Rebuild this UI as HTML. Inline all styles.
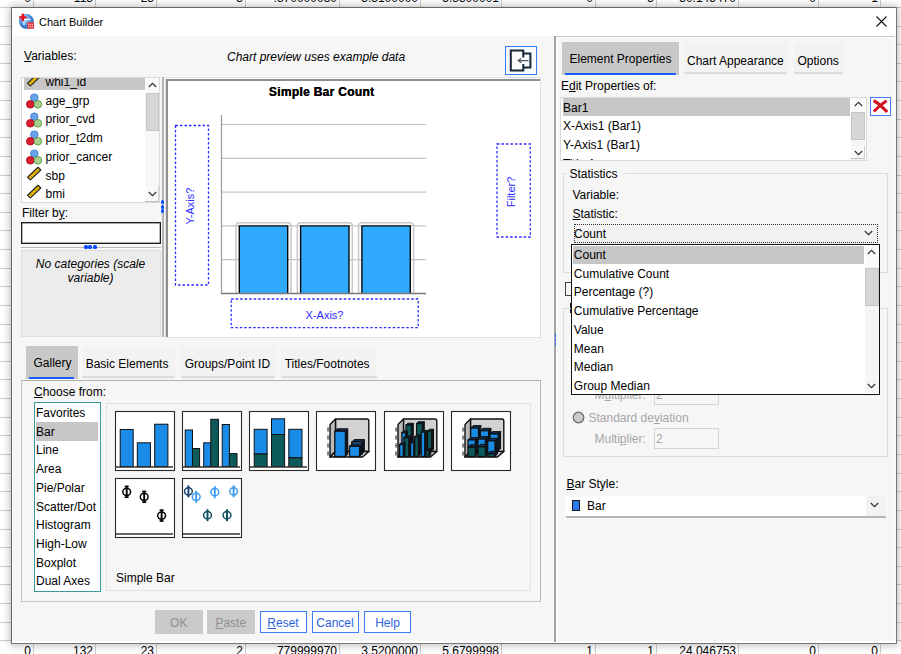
<!DOCTYPE html>
<html><head><meta charset="utf-8"><title>Chart Builder</title>
<style>
html,body{margin:0;padding:0;width:901px;height:654px;overflow:hidden;background:#fff;font-family:"Liberation Sans",sans-serif;font-size:12px;color:#000}
.a{position:absolute;box-sizing:border-box}
.t{position:absolute;line-height:14px;white-space:nowrap}
.u{text-decoration:underline;text-underline-offset:1px}
svg{position:absolute;overflow:visible}
</style></head><body>
<div class="a" style="left:0px;top:7px;width:901px;height:1px;background:#cdcdcd"></div>
<div class="a" style="left:0px;top:26px;width:901px;height:1px;background:#cdcdcd"></div>
<div class="a" style="left:0px;top:44px;width:901px;height:1px;background:#cdcdcd"></div>
<div class="a" style="left:0px;top:63px;width:901px;height:1px;background:#cdcdcd"></div>
<div class="a" style="left:0px;top:81px;width:901px;height:1px;background:#cdcdcd"></div>
<div class="a" style="left:0px;top:100px;width:901px;height:1px;background:#cdcdcd"></div>
<div class="a" style="left:0px;top:119px;width:901px;height:1px;background:#cdcdcd"></div>
<div class="a" style="left:0px;top:137px;width:901px;height:1px;background:#cdcdcd"></div>
<div class="a" style="left:0px;top:156px;width:901px;height:1px;background:#cdcdcd"></div>
<div class="a" style="left:0px;top:175px;width:901px;height:1px;background:#cdcdcd"></div>
<div class="a" style="left:0px;top:193px;width:901px;height:1px;background:#cdcdcd"></div>
<div class="a" style="left:0px;top:212px;width:901px;height:1px;background:#cdcdcd"></div>
<div class="a" style="left:0px;top:230px;width:901px;height:1px;background:#cdcdcd"></div>
<div class="a" style="left:0px;top:249px;width:901px;height:1px;background:#cdcdcd"></div>
<div class="a" style="left:0px;top:268px;width:901px;height:1px;background:#cdcdcd"></div>
<div class="a" style="left:0px;top:286px;width:901px;height:1px;background:#cdcdcd"></div>
<div class="a" style="left:0px;top:305px;width:901px;height:1px;background:#cdcdcd"></div>
<div class="a" style="left:0px;top:324px;width:901px;height:1px;background:#cdcdcd"></div>
<div class="a" style="left:0px;top:342px;width:901px;height:1px;background:#cdcdcd"></div>
<div class="a" style="left:0px;top:361px;width:901px;height:1px;background:#cdcdcd"></div>
<div class="a" style="left:0px;top:379px;width:901px;height:1px;background:#cdcdcd"></div>
<div class="a" style="left:0px;top:398px;width:901px;height:1px;background:#cdcdcd"></div>
<div class="a" style="left:0px;top:417px;width:901px;height:1px;background:#cdcdcd"></div>
<div class="a" style="left:0px;top:435px;width:901px;height:1px;background:#cdcdcd"></div>
<div class="a" style="left:0px;top:454px;width:901px;height:1px;background:#cdcdcd"></div>
<div class="a" style="left:0px;top:473px;width:901px;height:1px;background:#cdcdcd"></div>
<div class="a" style="left:0px;top:491px;width:901px;height:1px;background:#cdcdcd"></div>
<div class="a" style="left:0px;top:510px;width:901px;height:1px;background:#cdcdcd"></div>
<div class="a" style="left:0px;top:529px;width:901px;height:1px;background:#cdcdcd"></div>
<div class="a" style="left:0px;top:547px;width:901px;height:1px;background:#cdcdcd"></div>
<div class="a" style="left:0px;top:566px;width:901px;height:1px;background:#cdcdcd"></div>
<div class="a" style="left:0px;top:584px;width:901px;height:1px;background:#cdcdcd"></div>
<div class="a" style="left:0px;top:603px;width:901px;height:1px;background:#cdcdcd"></div>
<div class="a" style="left:0px;top:622px;width:901px;height:1px;background:#cdcdcd"></div>
<div class="a" style="left:0px;top:640px;width:901px;height:1px;background:#cdcdcd"></div>
<div class="a" style="left:33px;top:0px;width:1px;height:654px;background:#cdcdcd"></div>
<div class="a" style="left:95px;top:0px;width:1px;height:654px;background:#cdcdcd"></div>
<div class="a" style="left:156px;top:0px;width:1px;height:654px;background:#cdcdcd"></div>
<div class="a" style="left:245px;top:0px;width:1px;height:654px;background:#cdcdcd"></div>
<div class="a" style="left:339px;top:0px;width:1px;height:654px;background:#cdcdcd"></div>
<div class="a" style="left:420px;top:0px;width:1px;height:654px;background:#cdcdcd"></div>
<div class="a" style="left:501px;top:0px;width:1px;height:654px;background:#cdcdcd"></div>
<div class="a" style="left:595px;top:0px;width:1px;height:654px;background:#cdcdcd"></div>
<div class="a" style="left:656px;top:0px;width:1px;height:654px;background:#cdcdcd"></div>
<div class="a" style="left:738px;top:0px;width:1px;height:654px;background:#cdcdcd"></div>
<div class="a" style="left:818px;top:0px;width:1px;height:654px;background:#cdcdcd"></div>
<div class="a" style="left:880px;top:0px;width:1px;height:654px;background:#cdcdcd"></div>
<div class="t" style="left:-169px;top:-9px;width:200px;text-align:right;font-size:12px;">0</div>
<div class="t" style="left:-107px;top:-9px;width:200px;text-align:right;font-size:12px;">118</div>
<div class="t" style="left:-46px;top:-9px;width:200px;text-align:right;font-size:12px;">23</div>
<div class="t" style="left:43px;top:-9px;width:200px;text-align:right;font-size:12px;">3</div>
<div class="t" style="left:137px;top:-9px;width:200px;text-align:right;font-size:12px;">.870000030</div>
<div class="t" style="left:218px;top:-9px;width:200px;text-align:right;font-size:12px;">3.3100000</div>
<div class="t" style="left:299px;top:-9px;width:200px;text-align:right;font-size:12px;">5.8300001</div>
<div class="t" style="left:393px;top:-9px;width:200px;text-align:right;font-size:12px;">0</div>
<div class="t" style="left:454px;top:-9px;width:200px;text-align:right;font-size:12px;">3</div>
<div class="t" style="left:536px;top:-9px;width:200px;text-align:right;font-size:12px;">30.145470</div>
<div class="t" style="left:616px;top:-9px;width:200px;text-align:right;font-size:12px;">0</div>
<div class="t" style="left:678px;top:-9px;width:200px;text-align:right;font-size:12px;">1</div>
<div class="t" style="left:-169px;top:644px;width:200px;text-align:right;font-size:12px;">0</div>
<div class="t" style="left:-107px;top:644px;width:200px;text-align:right;font-size:12px;">132</div>
<div class="t" style="left:-46px;top:644px;width:200px;text-align:right;font-size:12px;">23</div>
<div class="t" style="left:43px;top:644px;width:200px;text-align:right;font-size:12px;">2</div>
<div class="t" style="left:137px;top:644px;width:200px;text-align:right;font-size:12px;">.779999970</div>
<div class="t" style="left:218px;top:644px;width:200px;text-align:right;font-size:12px;">3.5200000</div>
<div class="t" style="left:299px;top:644px;width:200px;text-align:right;font-size:12px;">5.6799998</div>
<div class="t" style="left:393px;top:644px;width:200px;text-align:right;font-size:12px;">1</div>
<div class="t" style="left:454px;top:644px;width:200px;text-align:right;font-size:12px;">1</div>
<div class="t" style="left:536px;top:644px;width:200px;text-align:right;font-size:12px;">24.046753</div>
<div class="t" style="left:616px;top:644px;width:200px;text-align:right;font-size:12px;">0</div>
<div class="t" style="left:678px;top:644px;width:200px;text-align:right;font-size:12px;">0</div>
<div class="a" style="left:11px;top:7px;width:886px;height:637px;border:1px solid #666;border-right:1.5px solid #777;border-bottom:1.5px solid #777;background:#f6f6f6;box-shadow:0 0 8px 1px rgba(0,0,0,.28)"></div>
<div class="a" style="left:12px;top:8px;width:884px;height:28px;background:#fff"></div>
<div class="a" style="left:12px;top:36px;width:1.3px;height:606px;background:#fff"></div>
<div class="a" style="left:12px;top:641px;width:884px;height:1.5px;background:#fff"></div>
<div class="t" style="left:39px;top:15px;font-size:11px;color:#000">Chart Builder</div>
<svg style="left:16px;top:11px" width="22" height="22" viewBox="0 0 22 22"><defs><radialGradient id="gb" cx="0.4" cy="0.35" r="0.7"><stop offset="0" stop-color="#cfe6ff"/><stop offset="0.55" stop-color="#4a90e0"/><stop offset="1" stop-color="#1f5fb8"/></radialGradient></defs><circle cx="10.4" cy="10.4" r="7.4" fill="url(#gb)"/><path d="M8 8.5 H14.5 M8 10.5 V14" stroke="#eef6ff" stroke-width="1.2"/><rect x="11.2" y="11.2" width="6.8" height="6.6" fill="#e0404a"/><path d="M12.3 13.6 H17 M12.3 15.6 H17" stroke="#fff" stroke-width="0.8" stroke-dasharray="1 0.8"/><path d="M3.2 6.4 H10.4 M6.8 2.8 V10" stroke="#e0101a" stroke-width="2.4"/></svg>
<svg style="left:876px;top:16px" width="11" height="11" viewBox="0 0 11 11"><path d="M0.5 0.5 L10.5 10.5 M10.5 0.5 L0.5 10.5" stroke="#111" stroke-width="1.1"/></svg>
<div class="t" style="left:24px;top:49px;font-size:12px;"><span class="u">V</span>ariables:</div>
<div class="a" style="left:21px;top:77px;width:139px;height:126px;background:#fff;border:1px solid #dadada"></div>
<div class="a" style="left:22px;top:78px;width:123px;height:124px;overflow:hidden">
<div class="a" style="left:2px;top:0px;width:121px;height:12px;background:#c6c6c6"></div>
<svg style="left:4px;top:-6.6px" width="17" height="16" viewBox="0 0 17 16"><path d="M1.6 12.2 L12 2.3 L14.8 5 L4.4 14.9 Z" fill="#f4c400" stroke="#2a2a2a" stroke-width="1.25" stroke-linejoin="round"/><path d="M4.6 10.6 L5.6 11.6 M6.6 8.7 L7.4 9.5 M8.6 6.8 L9.6 7.8 M10.6 4.9 L11.4 5.7" stroke="#4a3a00" stroke-width="0.9"/></svg>
<div class="t" style="left:23.5px;top:-3.0px">whi1_id</div>
<svg style="left:4px;top:14.800000000000002px" width="17" height="17" viewBox="0 0 17 17"><circle cx="8.3" cy="4.6" r="3.7" fill="#6aa4ec" stroke="#3a78d0" stroke-width="0.9"/><circle cx="4.3" cy="11.3" r="3.8" fill="#d82030" stroke="#b00818" stroke-width="0.9"/><circle cx="11.9" cy="11.3" r="3.8" fill="#a8d08c" stroke="#5a9a40" stroke-width="0.9"/></svg>
<div class="t" style="left:23.5px;top:15.700000000000003px">age_grp</div>
<svg style="left:4px;top:33.50000000000001px" width="17" height="17" viewBox="0 0 17 17"><circle cx="8.3" cy="4.6" r="3.7" fill="#6aa4ec" stroke="#3a78d0" stroke-width="0.9"/><circle cx="4.3" cy="11.3" r="3.8" fill="#d82030" stroke="#b00818" stroke-width="0.9"/><circle cx="11.9" cy="11.3" r="3.8" fill="#a8d08c" stroke="#5a9a40" stroke-width="0.9"/></svg>
<div class="t" style="left:23.5px;top:34.400000000000006px">prior_cvd</div>
<svg style="left:4px;top:52.199999999999996px" width="17" height="17" viewBox="0 0 17 17"><circle cx="8.3" cy="4.6" r="3.7" fill="#6aa4ec" stroke="#3a78d0" stroke-width="0.9"/><circle cx="4.3" cy="11.3" r="3.8" fill="#d82030" stroke="#b00818" stroke-width="0.9"/><circle cx="11.9" cy="11.3" r="3.8" fill="#a8d08c" stroke="#5a9a40" stroke-width="0.9"/></svg>
<div class="t" style="left:23.5px;top:53.099999999999994px">prior_t2dm</div>
<svg style="left:4px;top:70.90000000000002px" width="17" height="17" viewBox="0 0 17 17"><circle cx="8.3" cy="4.6" r="3.7" fill="#6aa4ec" stroke="#3a78d0" stroke-width="0.9"/><circle cx="4.3" cy="11.3" r="3.8" fill="#d82030" stroke="#b00818" stroke-width="0.9"/><circle cx="11.9" cy="11.3" r="3.8" fill="#a8d08c" stroke="#5a9a40" stroke-width="0.9"/></svg>
<div class="t" style="left:23.5px;top:71.80000000000001px">prior_cancer</div>
<svg style="left:4px;top:87.4px" width="17" height="16" viewBox="0 0 17 16"><path d="M1.6 12.2 L12 2.3 L14.8 5 L4.4 14.9 Z" fill="#f4c400" stroke="#2a2a2a" stroke-width="1.25" stroke-linejoin="round"/><path d="M4.6 10.6 L5.6 11.6 M6.6 8.7 L7.4 9.5 M8.6 6.8 L9.6 7.8 M10.6 4.9 L11.4 5.7" stroke="#4a3a00" stroke-width="0.9"/></svg>
<div class="t" style="left:23.5px;top:90.5px">sbp</div>
<svg style="left:4px;top:105.4px" width="17" height="16" viewBox="0 0 17 16"><path d="M1.6 12.2 L12 2.3 L14.8 5 L4.4 14.9 Z" fill="#f4c400" stroke="#2a2a2a" stroke-width="1.25" stroke-linejoin="round"/><path d="M4.6 10.6 L5.6 11.6 M6.6 8.7 L7.4 9.5 M8.6 6.8 L9.6 7.8 M10.6 4.9 L11.4 5.7" stroke="#4a3a00" stroke-width="0.9"/></svg>
<div class="t" style="left:23.5px;top:109.19999999999999px">bmi</div>
</div>
<div class="a" style="left:145px;top:78px;width:14px;height:124px;background:#f7f7f7"></div>
<div class="a" style="left:145px;top:78px;width:14px;height:15px;background:#fafafa"></div>
<div class="a" style="left:145.5px;top:93px;width:13px;height:38px;background:#d6d6d6;border:1px solid #c6c6c6"></div>
<svg style="left:148px;top:82px" width="9" height="6" viewBox="0 0 9 6"><path d="M0.8 5 L4.5 1.3 L8.2 5" fill="none" stroke="#333" stroke-width="1.2"/></svg>
<div class="a" style="left:145px;top:187px;width:14px;height:14.5px;background:#f9f9f9;border-right:1px solid #cfcfcf;border-bottom:1.5px solid #bdbdbd"></div>
<svg style="left:148px;top:191px" width="9" height="6" viewBox="0 0 9 6"><path d="M0.8 1 L4.5 4.7 L8.2 1" fill="none" stroke="#333" stroke-width="1.2"/></svg>
<div class="t" style="left:22px;top:206px;font-size:12px;">Filter b<span class="u">y</span>:</div>
<div class="a" style="left:21px;top:222px;width:140px;height:22px;background:#fff;border:1px solid #1e1e1e;box-shadow:inset 0 0 0 0.4px #555"></div>
<div class="a" style="left:21px;top:247px;width:140px;height:1px;background:#b8b8b8"></div>
<div class="a" style="left:84.0px;top:245px;width:4px;height:3.5px;background:#0a4cff;border-radius:1.5px"></div>
<div class="a" style="left:88.4px;top:245px;width:4px;height:3.5px;background:#0a4cff;border-radius:1.5px"></div>
<div class="a" style="left:92.8px;top:245px;width:4px;height:3.5px;background:#0a4cff;border-radius:1.5px"></div>
<div class="a" style="left:21px;top:250px;width:140px;height:87px;background:#ececec;border:1px solid #dedede"></div>
<div class="t" style="left:-59.5px;top:257px;width:300px;text-align:center;font-size:12px;font-style:italic">No categories (scale</div>
<div class="t" style="left:-59.5px;top:271px;width:300px;text-align:center;font-size:12px;font-style:italic">variable)</div>
<div class="a" style="left:162px;top:77px;width:2px;height:260px;background:#b4b4b4"></div>
<div class="a" style="left:161px;top:200.0px;width:3px;height:4px;background:#0a4cff;border-radius:1.5px"></div>
<div class="a" style="left:161px;top:204.7px;width:3px;height:4px;background:#0a4cff;border-radius:1.5px"></div>
<div class="a" style="left:161px;top:209.4px;width:3px;height:4px;background:#0a4cff;border-radius:1.5px"></div>
<div class="t" style="left:227px;top:50px;font-size:12px;font-style:italic">Chart preview uses example data</div>
<div class="a" style="left:505px;top:46px;width:32px;height:29px;background:#fafafa;border:1px solid #2f7ff0"></div>
<svg style="left:505px;top:46px" width="32" height="29" viewBox="0 0 32 29"><path d="M18.3 11.5 V4.6 H5.8 V24.4 H18.3 V17.9" fill="none" stroke="#17283a" stroke-width="2"/><path d="M18.3 7.4 H25.4 V21.5 H18.3" fill="none" stroke="#17283a" stroke-width="2"/><path d="M23.5 14.6 H13.8 M16.2 12.4 L13.2 14.6 L16.2 16.8" fill="none" stroke="#50606e" stroke-width="1.3"/></svg>
<div class="a" style="left:165px;top:77px;width:376px;height:261px;background:#fff;border:1px solid #e0e0e0"></div>
<div class="a" style="left:166px;top:79px;width:2px;height:258px;background:#8e8e8e"></div>
<div class="a" style="left:166px;top:79px;width:374px;height:2px;background:#8e8e8e"></div>
<div class="t" style="left:171.5px;top:84.8px;width:300px;text-align:center;font-size:12px;font-weight:bold;letter-spacing:0.3px;text-shadow:0.35px 0 0 #000">Simple Bar Count</div>
<svg style="left:165px;top:77px" width="375" height="260" viewBox="165 77 375 260"><line x1="221.5" y1="115" x2="221.5" y2="294" stroke="#9a9a9a" stroke-width="1.2"/><line x1="222" y1="124.5" x2="426" y2="124.5" stroke="#c4c4c4" stroke-width="1.2"/><line x1="222" y1="158.3" x2="426" y2="158.3" stroke="#c4c4c4" stroke-width="1.2"/><line x1="222" y1="192.1" x2="426" y2="192.1" stroke="#c4c4c4" stroke-width="1.2"/><line x1="222" y1="225.9" x2="426" y2="225.9" stroke="#c4c4c4" stroke-width="1.2"/><line x1="222" y1="259.7" x2="426" y2="259.7" stroke="#c4c4c4" stroke-width="1.2"/><path d="M236.0 294 V226 Q236.0 222.7 239.3 222.7 H287.7 Q291.0 222.7 291.0 226 V294" fill="none" stroke="#c8c8c8" stroke-width="1.5"/><path d="M239.3 294 V225.9 H287.7 V294" fill="#30aaff" stroke="#0a0a0a" stroke-width="1.4"/><path d="M297.3 294 V226 Q297.3 222.7 300.6 222.7 H349.0 Q352.3 222.7 352.3 226 V294" fill="none" stroke="#c8c8c8" stroke-width="1.5"/><path d="M300.6 294 V225.9 H349.0 V294" fill="#30aaff" stroke="#0a0a0a" stroke-width="1.4"/><path d="M358.59999999999997 294 V226 Q358.59999999999997 222.7 361.9 222.7 H410.29999999999995 Q413.59999999999997 222.7 413.59999999999997 226 V294" fill="none" stroke="#c8c8c8" stroke-width="1.5"/><path d="M361.9 294 V225.9 H410.29999999999995 V294" fill="#30aaff" stroke="#0a0a0a" stroke-width="1.4"/><line x1="221" y1="293.5" x2="426" y2="293.5" stroke="#7a7a7a" stroke-width="1.3"/><rect x="175.5" y="125.5" width="33.0" height="159.5" fill="none" stroke="#2d2dff" stroke-width="1.3" stroke-dasharray="2.5 2"/><rect x="231.2" y="299" width="187.0" height="28.600000000000023" fill="none" stroke="#2d2dff" stroke-width="1.3" stroke-dasharray="2.5 2"/><rect x="497" y="144" width="33.299999999999955" height="93" fill="none" stroke="#2d2dff" stroke-width="1.3" stroke-dasharray="2.5 2"/></svg>
<div class="t" style="left:190.4px;top:206px;width:0;height:0;font-size:11px;color:#2d2dff"><div style="position:absolute;left:-20px;top:-7px;width:40px;text-align:center;transform:rotate(-90deg)">Y-Axis?</div></div>
<div class="t" style="left:174.5px;top:308px;width:300px;text-align:center;font-size:11px;color:#2d2dff">X-Axis?</div>
<div class="t" style="left:511px;top:191.6px;width:0;height:0;font-size:11px;color:#2d2dff"><div style="position:absolute;left:-20px;top:-7px;width:40px;text-align:center;transform:rotate(-90deg)">Filter?</div></div>
<div class="a" style="left:26px;top:346px;width:52px;height:33px;background:#c8c8c8"></div>
<div class="a" style="left:29px;top:377px;width:45px;height:2px;background:#1a5cff"></div>
<div class="t" style="left:33.5px;top:356px;font-size:12px;">Gallery</div>
<div class="a" style="left:82px;top:346px;width:93px;height:33px;background:#f2f2f2"></div>
<div class="a" style="left:82px;top:376px;width:93px;height:2px;background:#dcdcdc"></div>
<div class="t" style="left:85.7px;top:357px;font-size:12px;">Basic Elements</div>
<div class="a" style="left:181px;top:346px;width:93.5px;height:33px;background:#f2f2f2"></div>
<div class="a" style="left:181px;top:376px;width:93.5px;height:2px;background:#dcdcdc"></div>
<div class="t" style="left:184.7px;top:357px;font-size:12px;">Groups/Point ID</div>
<div class="a" style="left:281px;top:346px;width:95.5px;height:33px;background:#f2f2f2"></div>
<div class="a" style="left:281px;top:376px;width:95.5px;height:2px;background:#dcdcdc"></div>
<div class="t" style="left:284.7px;top:357px;font-size:12px;">Titles/Footnotes</div>
<div class="a" style="left:21px;top:379.5px;width:519.5px;height:222.5px;border:1px solid #c4c4c4;border-top-color:#b0b0b0;border-right-color:#b8b8b8"></div>
<div class="t" style="left:34px;top:385px;font-size:12px;"><span class="u">C</span>hoose from:</div>
<div class="a" style="left:33.5px;top:402px;width:67px;height:189.5px;background:#fff;border:1px solid #3a9a9a"></div>
<div class="a" style="left:35.5px;top:422px;width:62.5px;height:19px;background:#c6c6c6"></div>
<div class="t" style="left:36px;top:406.0px;font-size:12px;">Favorites</div>
<div class="t" style="left:36px;top:424.7px;font-size:12px;">Bar</div>
<div class="t" style="left:36px;top:443.4px;font-size:12px;">Line</div>
<div class="t" style="left:36px;top:462.1px;font-size:12px;">Area</div>
<div class="t" style="left:36px;top:480.8px;font-size:12px;">Pie/Polar</div>
<div class="t" style="left:36px;top:499.5px;font-size:12px;">Scatter/Dot</div>
<div class="t" style="left:36px;top:518.2px;font-size:12px;">Histogram</div>
<div class="t" style="left:36px;top:536.9px;font-size:12px;">High-Low</div>
<div class="t" style="left:36px;top:555.6px;font-size:12px;">Boxplot</div>
<div class="t" style="left:36px;top:574.3px;font-size:12px;">Dual Axes</div>
<div class="a" style="left:106px;top:402.5px;width:424.5px;height:188.5px;border:1px solid #e2e2e2;background:#f6f6f6"></div>
<div class="t" style="left:116px;top:571px;font-size:12px;">Simple Bar</div>
<svg style="left:115px;top:411px" width="60" height="60" viewBox="0 0 60 60"><rect x="0.5" y="0.5" width="59" height="59" fill="#fff" stroke="#2a2a2a" stroke-width="1.1"/><rect x="5.2" y="18.5" width="13.0" height="37.0" fill="#1a8ce8" stroke="#111" stroke-width="1"/><rect x="22.3" y="31.8" width="13.2" height="23.7" fill="#1a8ce8" stroke="#111" stroke-width="1"/><rect x="39.7" y="13.2" width="13.199999999999996" height="42.3" fill="#1a8ce8" stroke="#111" stroke-width="1"/><line x1="1" y1="56" x2="58" y2="56" stroke="#333" stroke-width="1.6"/></svg>
<svg style="left:182px;top:411px" width="60" height="60" viewBox="0 0 60 60"><rect x="0.5" y="0.5" width="59" height="59" fill="#fff" stroke="#2a2a2a" stroke-width="1.1"/><rect x="3.2" y="19" width="7.3" height="36.5" fill="#1a8ce8" stroke="#111" stroke-width="1"/><rect x="10.5" y="37.5" width="7.100000000000001" height="18.0" fill="#0d5a5a" stroke="#111" stroke-width="1"/><rect x="21.7" y="31.8" width="7.100000000000001" height="23.7" fill="#1a8ce8" stroke="#111" stroke-width="1"/><rect x="28.8" y="8.3" width="7.599999999999998" height="47.2" fill="#0d5a5a" stroke="#111" stroke-width="1"/><rect x="40.2" y="13.5" width="7.199999999999996" height="42.0" fill="#1a8ce8" stroke="#111" stroke-width="1"/><rect x="47.4" y="42.6" width="7.600000000000001" height="12.899999999999999" fill="#0d5a5a" stroke="#111" stroke-width="1"/><line x1="1" y1="56" x2="58" y2="56" stroke="#333" stroke-width="1.6"/></svg>
<svg style="left:249px;top:411px" width="60" height="60" viewBox="0 0 60 60"><rect x="0.5" y="0.5" width="59" height="59" fill="#fff" stroke="#2a2a2a" stroke-width="1.1"/><rect x="5.2" y="18.3" width="12.900000000000002" height="24.7" fill="#1a8ce8" stroke="#111" stroke-width="1"/><rect x="5.2" y="43" width="12.900000000000002" height="12.5" fill="#0d5a5a" stroke="#111" stroke-width="1"/><rect x="22.5" y="7.8" width="13.100000000000001" height="15.7" fill="#1a8ce8" stroke="#111" stroke-width="1"/><rect x="22.5" y="23.5" width="13.100000000000001" height="32.0" fill="#0d5a5a" stroke="#111" stroke-width="1"/><rect x="39.8" y="18.3" width="13.200000000000003" height="28.499999999999996" fill="#1a8ce8" stroke="#111" stroke-width="1"/><rect x="39.8" y="46.8" width="13.200000000000003" height="8.700000000000003" fill="#0d5a5a" stroke="#111" stroke-width="1"/><line x1="1" y1="56" x2="58" y2="56" stroke="#333" stroke-width="1.6"/></svg>
<svg style="left:316px;top:411px" width="60" height="60" viewBox="0 0 60 60"><rect x="0.5" y="0.5" width="59" height="59" fill="#fff" stroke="#2a2a2a" stroke-width="1.1"/><path d="M19.5 8 H51 Q52.8 8 52.8 9.8 V40.5 H19.5 Z" fill="#d2d2d2" stroke="#111" stroke-width="1.4" stroke-linejoin="round"/><polygon points="14,13.5 19.5,8 19.5,40.5 14,46" fill="#bababa" stroke="#111" stroke-width="1.4" stroke-linejoin="round"/><polygon points="14,46 19.5,40.5 52.8,40.5 46.5,46" fill="#cfcfcf" stroke="#111" stroke-width="1.6" stroke-linejoin="round"/><line x1="11" y1="17" x2="14" y2="17" stroke="#444" stroke-width="0.9"/><line x1="11" y1="18.5" x2="14" y2="18.5" stroke="#444" stroke-width="0.9"/><line x1="11" y1="20" x2="14" y2="20" stroke="#444" stroke-width="0.9"/><line x1="11" y1="25" x2="14" y2="25" stroke="#444" stroke-width="0.9"/><line x1="11" y1="26.5" x2="14" y2="26.5" stroke="#444" stroke-width="0.9"/><line x1="11" y1="28" x2="14" y2="28" stroke="#444" stroke-width="0.9"/><line x1="11" y1="33" x2="14" y2="33" stroke="#444" stroke-width="0.9"/><line x1="11" y1="34.5" x2="14" y2="34.5" stroke="#444" stroke-width="0.9"/><line x1="11" y1="36" x2="14" y2="36" stroke="#444" stroke-width="0.9"/><line x1="11" y1="41" x2="14" y2="41" stroke="#444" stroke-width="0.9"/><line x1="11" y1="42.5" x2="14" y2="42.5" stroke="#444" stroke-width="0.9"/><line x1="11" y1="44" x2="14" y2="44" stroke="#444" stroke-width="0.9"/><polygon points="46,31 48.4,28.6 48.4,40.6 46,43" fill="#071828" stroke="#111" stroke-width="1"/><polygon points="35.8,31 38.199999999999996,28.6 48.4,28.6 46,31" fill="#0e3058" stroke="#111" stroke-width="1"/><rect x="35.8" y="31" width="10.200000000000003" height="12" fill="#3aa0f0" stroke="#111" stroke-width="1.3"/><polygon points="29.4,20.2 31.799999999999997,17.8 31.799999999999997,43.1 29.4,45.5" fill="#071828" stroke="#111" stroke-width="1"/><polygon points="18.8,20.2 21.2,17.8 31.799999999999997,17.8 29.4,20.2" fill="#0e3058" stroke="#111" stroke-width="1"/><rect x="18.8" y="20.2" width="10.599999999999998" height="25.3" fill="#1a8ce8" stroke="#111" stroke-width="1.3"/><polygon points="43.6,35.3 46.0,32.9 46.0,43.1 43.6,45.5" fill="#071828" stroke="#111" stroke-width="1"/><polygon points="33.5,35.3 35.9,32.9 46.0,32.9 43.6,35.3" fill="#0e3058" stroke="#111" stroke-width="1"/><rect x="33.5" y="35.3" width="10.100000000000001" height="10.200000000000003" fill="#1a8ce8" stroke="#111" stroke-width="1.3"/></svg>
<svg style="left:384px;top:411px" width="60" height="60" viewBox="0 0 60 60"><rect x="0.5" y="0.5" width="59" height="59" fill="#fff" stroke="#2a2a2a" stroke-width="1.1"/><path d="M19.5 8 H51 Q52.8 8 52.8 9.8 V40.5 H19.5 Z" fill="#d2d2d2" stroke="#111" stroke-width="1.4" stroke-linejoin="round"/><polygon points="14,13.5 19.5,8 19.5,40.5 14,46" fill="#bababa" stroke="#111" stroke-width="1.4" stroke-linejoin="round"/><polygon points="14,46 19.5,40.5 52.8,40.5 46.5,46" fill="#cfcfcf" stroke="#111" stroke-width="1.6" stroke-linejoin="round"/><line x1="11" y1="17" x2="14" y2="17" stroke="#444" stroke-width="0.9"/><line x1="11" y1="18.5" x2="14" y2="18.5" stroke="#444" stroke-width="0.9"/><line x1="11" y1="20" x2="14" y2="20" stroke="#444" stroke-width="0.9"/><line x1="11" y1="25" x2="14" y2="25" stroke="#444" stroke-width="0.9"/><line x1="11" y1="26.5" x2="14" y2="26.5" stroke="#444" stroke-width="0.9"/><line x1="11" y1="28" x2="14" y2="28" stroke="#444" stroke-width="0.9"/><line x1="11" y1="33" x2="14" y2="33" stroke="#444" stroke-width="0.9"/><line x1="11" y1="34.5" x2="14" y2="34.5" stroke="#444" stroke-width="0.9"/><line x1="11" y1="36" x2="14" y2="36" stroke="#444" stroke-width="0.9"/><line x1="11" y1="41" x2="14" y2="41" stroke="#444" stroke-width="0.9"/><line x1="11" y1="42.5" x2="14" y2="42.5" stroke="#444" stroke-width="0.9"/><line x1="11" y1="44" x2="14" y2="44" stroke="#444" stroke-width="0.9"/><polygon points="27.5,14 29.3,12.2 29.3,38.2 27.5,40" fill="#071828" stroke="#111" stroke-width="1"/><polygon points="22,14 23.8,12.2 29.3,12.2 27.5,14" fill="#0e3058" stroke="#111" stroke-width="1"/><rect x="22" y="14" width="5.5" height="26" fill="#0d5a5a" stroke="#111" stroke-width="1.3"/><polygon points="38.5,12.5 40.3,10.7 40.3,38.2 38.5,40" fill="#071828" stroke="#111" stroke-width="1"/><polygon points="32.6,12.5 34.4,10.7 40.3,10.7 38.5,12.5" fill="#0e3058" stroke="#111" stroke-width="1"/><rect x="32.6" y="12.5" width="5.899999999999999" height="27.5" fill="#0d5a5a" stroke="#111" stroke-width="1.3"/><polygon points="47.7,20 49.5,18.2 49.5,38.2 47.7,40" fill="#071828" stroke="#111" stroke-width="1"/><polygon points="43.6,20 45.4,18.2 49.5,18.2 47.7,20" fill="#0e3058" stroke="#111" stroke-width="1"/><rect x="43.6" y="20" width="4.100000000000001" height="20" fill="#0d5a5a" stroke="#111" stroke-width="1.3"/><polygon points="21.6,21.6 23.400000000000002,19.8 23.400000000000002,38.2 21.6,40" fill="#071828" stroke="#111" stroke-width="1"/><polygon points="17.9,21.6 19.7,19.8 23.400000000000002,19.8 21.6,21.6" fill="#0e3058" stroke="#111" stroke-width="1"/><rect x="17.9" y="21.6" width="3.700000000000003" height="18.4" fill="#1a8ce8" stroke="#111" stroke-width="1.3"/><polygon points="24.8,26.6 26.6,24.8 26.6,43.7 24.8,45.5" fill="#071828" stroke="#111" stroke-width="1"/><polygon points="20,26.6 21.8,24.8 26.6,24.8 24.8,26.6" fill="#0e3058" stroke="#111" stroke-width="1"/><rect x="20" y="26.6" width="4.800000000000001" height="18.9" fill="#0d5a5a" stroke="#111" stroke-width="1.3"/><polygon points="19.3,33.5 21.1,31.7 21.1,43.7 19.3,45.5" fill="#071828" stroke="#111" stroke-width="1"/><polygon points="15.6,33.5 17.4,31.7 21.1,31.7 19.3,33.5" fill="#0e3058" stroke="#111" stroke-width="1"/><rect x="15.6" y="33.5" width="3.700000000000001" height="12.0" fill="#1a8ce8" stroke="#111" stroke-width="1.3"/><polygon points="29.8,31.7 31.6,29.9 31.6,43.7 29.8,45.5" fill="#071828" stroke="#111" stroke-width="1"/><polygon points="26.6,31.7 28.400000000000002,29.9 31.6,29.9 29.8,31.7" fill="#0e3058" stroke="#111" stroke-width="1"/><rect x="26.6" y="31.7" width="3.1999999999999993" height="13.8" fill="#1a8ce8" stroke="#111" stroke-width="1.3"/><polygon points="34.4,25.7 36.199999999999996,23.9 36.199999999999996,43.7 34.4,45.5" fill="#071828" stroke="#111" stroke-width="1"/><polygon points="30.7,25.7 32.5,23.9 36.199999999999996,23.9 34.4,25.7" fill="#0e3058" stroke="#111" stroke-width="1"/><rect x="30.7" y="25.7" width="3.6999999999999993" height="19.8" fill="#0d5a5a" stroke="#111" stroke-width="1.3"/><polygon points="40.8,21.1 42.599999999999994,19.3 42.599999999999994,43.7 40.8,45.5" fill="#071828" stroke="#111" stroke-width="1"/><polygon points="37.2,21.1 39.0,19.3 42.599999999999994,19.3 40.8,21.1" fill="#0e3058" stroke="#111" stroke-width="1"/><rect x="37.2" y="21.1" width="3.5999999999999943" height="24.4" fill="#1a8ce8" stroke="#111" stroke-width="1.3"/><polygon points="45,39.4 46.8,37.6 46.8,43.7 45,45.5" fill="#071828" stroke="#111" stroke-width="1"/><polygon points="41.7,39.4 43.5,37.6 46.8,37.6 45,39.4" fill="#0e3058" stroke="#111" stroke-width="1"/><rect x="41.7" y="39.4" width="3.299999999999997" height="6.100000000000001" fill="#0d5a5a" stroke="#111" stroke-width="1.3"/></svg>
<svg style="left:451px;top:411px" width="60" height="60" viewBox="0 0 60 60"><rect x="0.5" y="0.5" width="59" height="59" fill="#fff" stroke="#2a2a2a" stroke-width="1.1"/><path d="M19.5 8 H51 Q52.8 8 52.8 9.8 V40.5 H19.5 Z" fill="#d2d2d2" stroke="#111" stroke-width="1.4" stroke-linejoin="round"/><polygon points="14,13.5 19.5,8 19.5,40.5 14,46" fill="#bababa" stroke="#111" stroke-width="1.4" stroke-linejoin="round"/><polygon points="14,46 19.5,40.5 52.8,40.5 46.5,46" fill="#cfcfcf" stroke="#111" stroke-width="1.6" stroke-linejoin="round"/><line x1="11" y1="17" x2="14" y2="17" stroke="#444" stroke-width="0.9"/><line x1="11" y1="18.5" x2="14" y2="18.5" stroke="#444" stroke-width="0.9"/><line x1="11" y1="20" x2="14" y2="20" stroke="#444" stroke-width="0.9"/><line x1="11" y1="25" x2="14" y2="25" stroke="#444" stroke-width="0.9"/><line x1="11" y1="26.5" x2="14" y2="26.5" stroke="#444" stroke-width="0.9"/><line x1="11" y1="28" x2="14" y2="28" stroke="#444" stroke-width="0.9"/><line x1="11" y1="33" x2="14" y2="33" stroke="#444" stroke-width="0.9"/><line x1="11" y1="34.5" x2="14" y2="34.5" stroke="#444" stroke-width="0.9"/><line x1="11" y1="36" x2="14" y2="36" stroke="#444" stroke-width="0.9"/><line x1="11" y1="41" x2="14" y2="41" stroke="#444" stroke-width="0.9"/><line x1="11" y1="42.5" x2="14" y2="42.5" stroke="#444" stroke-width="0.9"/><line x1="11" y1="44" x2="14" y2="44" stroke="#444" stroke-width="0.9"/><polygon points="27.5,17 29.9,14.6 29.9,37.6 27.5,40" fill="#071828" stroke="#111" stroke-width="1"/><polygon points="19.7,17 22.099999999999998,14.6 29.9,14.6 27.5,17" fill="#0e3058" stroke="#111" stroke-width="1"/><rect x="19.7" y="17" width="7.800000000000001" height="23" fill="#1a8ce8" stroke="#111" stroke-width="1.3"/><polygon points="37.6,19.7 40.0,17.3 40.0,37.6 37.6,40" fill="#071828" stroke="#111" stroke-width="1"/><polygon points="29.4,19.7 31.799999999999997,17.3 40.0,17.3 37.6,19.7" fill="#0e3058" stroke="#111" stroke-width="1"/><rect x="29.4" y="19.7" width="8.200000000000003" height="20.3" fill="#1a8ce8" stroke="#111" stroke-width="1.3"/><polygon points="47.2,23 49.6,20.6 49.6,37.6 47.2,40" fill="#071828" stroke="#111" stroke-width="1"/><polygon points="39,23 41.4,20.6 49.6,20.6 47.2,23" fill="#0e3058" stroke="#111" stroke-width="1"/><rect x="39" y="23" width="8.200000000000003" height="17" fill="#1a8ce8" stroke="#111" stroke-width="1.3"/><polygon points="24.3,28.9 26.7,26.5 26.7,33.800000000000004 24.3,36.2" fill="#071828" stroke="#111" stroke-width="1"/><polygon points="17,28.9 19.4,26.5 26.7,26.5 24.3,28.9" fill="#0e3058" stroke="#111" stroke-width="1"/><rect x="17" y="28.9" width="7.300000000000001" height="7.300000000000004" fill="#1a8ce8" stroke="#111" stroke-width="1.3"/><polygon points="24.3,36.2 26.7,33.800000000000004 26.7,43.1 24.3,45.5" fill="#071828" stroke="#111" stroke-width="1"/><polygon points="17,36.2 19.4,33.800000000000004 26.7,33.800000000000004 24.3,36.2" fill="#0e3058" stroke="#111" stroke-width="1"/><rect x="17" y="36.2" width="7.300000000000001" height="9.299999999999997" fill="#0d5a5a" stroke="#111" stroke-width="1.3"/><polygon points="34.4,28 36.8,25.6 36.8,33.4 34.4,35.8" fill="#071828" stroke="#111" stroke-width="1"/><polygon points="27,28 29.4,25.6 36.8,25.6 34.4,28" fill="#0e3058" stroke="#111" stroke-width="1"/><rect x="27" y="28" width="7.399999999999999" height="7.799999999999997" fill="#1a8ce8" stroke="#111" stroke-width="1.3"/><polygon points="34.4,35.8 36.8,33.4 36.8,43.1 34.4,45.5" fill="#071828" stroke="#111" stroke-width="1"/><polygon points="27,35.8 29.4,33.4 36.8,33.4 34.4,35.8" fill="#0e3058" stroke="#111" stroke-width="1"/><rect x="27" y="35.8" width="7.399999999999999" height="9.700000000000003" fill="#0d5a5a" stroke="#111" stroke-width="1.3"/><polygon points="44,29.8 46.4,27.400000000000002 46.4,40.300000000000004 44,42.7" fill="#071828" stroke="#111" stroke-width="1"/><polygon points="36.7,29.8 39.1,27.400000000000002 46.4,27.400000000000002 44,29.8" fill="#0e3058" stroke="#111" stroke-width="1"/><rect x="36.7" y="29.8" width="7.299999999999997" height="12.900000000000002" fill="#1a8ce8" stroke="#111" stroke-width="1.3"/><polygon points="44,42.7 46.4,40.300000000000004 46.4,43.1 44,45.5" fill="#071828" stroke="#111" stroke-width="1"/><polygon points="36.7,42.7 39.1,40.300000000000004 46.4,40.300000000000004 44,42.7" fill="#0e3058" stroke="#111" stroke-width="1"/><rect x="36.7" y="42.7" width="7.299999999999997" height="2.799999999999997" fill="#0d5a5a" stroke="#111" stroke-width="1.3"/></svg>
<svg style="left:115px;top:478px" width="60" height="60" viewBox="0 0 60 60"><rect x="0.5" y="0.5" width="59" height="59" fill="#fff" stroke="#2a2a2a" stroke-width="1.1"/><ellipse cx="11.7" cy="13.8" rx="3.9" ry="3.6" fill="none" stroke="#000" stroke-width="1.5"/><line x1="11.7" y1="7.800000000000001" x2="11.7" y2="19.8" stroke="#000" stroke-width="1.9"/><line x1="9.7" y1="8.4" x2="13.7" y2="8.4" stroke="#000" stroke-width="1.6"/><line x1="9.7" y1="19.200000000000003" x2="13.7" y2="19.200000000000003" stroke="#000" stroke-width="1.6"/><ellipse cx="29.2" cy="18.8" rx="3.9" ry="3.6" fill="none" stroke="#000" stroke-width="1.5"/><line x1="29.2" y1="12.8" x2="29.2" y2="24.8" stroke="#000" stroke-width="1.9"/><line x1="27.2" y1="13.4" x2="31.2" y2="13.4" stroke="#000" stroke-width="1.6"/><line x1="27.2" y1="24.200000000000003" x2="31.2" y2="24.200000000000003" stroke="#000" stroke-width="1.6"/><ellipse cx="46.6" cy="37.6" rx="3.9" ry="3.6" fill="none" stroke="#000" stroke-width="1.5"/><line x1="46.6" y1="31.6" x2="46.6" y2="43.6" stroke="#000" stroke-width="1.9"/><line x1="44.6" y1="32.2" x2="48.6" y2="32.2" stroke="#000" stroke-width="1.6"/><line x1="44.6" y1="43.0" x2="48.6" y2="43.0" stroke="#000" stroke-width="1.6"/><line x1="1" y1="56" x2="58" y2="56" stroke="#333" stroke-width="1.6"/></svg>
<svg style="left:182px;top:478px" width="60" height="60" viewBox="0 0 60 60"><rect x="0.5" y="0.5" width="59" height="59" fill="#fff" stroke="#2a2a2a" stroke-width="1.1"/><ellipse cx="6.4" cy="13.3" rx="3.9" ry="3.6" fill="none" stroke="#17406a" stroke-width="1.5"/><line x1="6.4" y1="7.300000000000001" x2="6.4" y2="19.3" stroke="#17406a" stroke-width="1.9"/><ellipse cx="14.2" cy="18.8" rx="3.9" ry="3.6" fill="none" stroke="#3b9cf2" stroke-width="1.5"/><line x1="14.2" y1="12.8" x2="14.2" y2="24.8" stroke="#3b9cf2" stroke-width="1.9"/><ellipse cx="32.8" cy="14.2" rx="3.9" ry="3.6" fill="none" stroke="#3b9cf2" stroke-width="1.5"/><line x1="32.8" y1="8.2" x2="32.8" y2="20.2" stroke="#3b9cf2" stroke-width="1.9"/><ellipse cx="51.6" cy="13.3" rx="3.9" ry="3.6" fill="none" stroke="#3b9cf2" stroke-width="1.5"/><line x1="51.6" y1="7.300000000000001" x2="51.6" y2="19.3" stroke="#3b9cf2" stroke-width="1.9"/><ellipse cx="25.5" cy="37.2" rx="3.9" ry="3.6" fill="none" stroke="#0e4d5e" stroke-width="1.5"/><line x1="25.5" y1="31.200000000000003" x2="25.5" y2="43.2" stroke="#0e4d5e" stroke-width="1.9"/><ellipse cx="45" cy="37.2" rx="3.9" ry="3.6" fill="none" stroke="#0e4d5e" stroke-width="1.5"/><line x1="45" y1="31.200000000000003" x2="45" y2="43.2" stroke="#0e4d5e" stroke-width="1.9"/><line x1="1" y1="56" x2="58" y2="56" stroke="#333" stroke-width="1.6"/></svg>
<div class="a" style="left:154.5px;top:610px;width:48.5px;height:24px;background:#cacaca"></div>
<div class="t" style="left:28.75px;top:616px;width:300px;text-align:center;font-size:12px;color:#8e8e8e">OK</div>
<div class="a" style="left:206.5px;top:610px;width:48.5px;height:24px;background:#cacaca"></div>
<div class="t" style="left:80.75px;top:616px;width:300px;text-align:center;font-size:12px;color:#8e8e8e"><span class="u">P</span>aste</div>
<div class="a" style="left:259.5px;top:611px;width:47.0px;height:22px;background:#fff;border:1px solid #3f7ef5"></div>
<div class="t" style="left:133.0px;top:616px;width:300px;text-align:center;font-size:12px;color:#2a62e0"><span class="u">R</span>eset</div>
<div class="a" style="left:311.5px;top:611px;width:47.0px;height:22px;background:#fff;border:1px solid #3f7ef5"></div>
<div class="t" style="left:185.0px;top:616px;width:300px;text-align:center;font-size:12px;color:#2a62e0">Cancel</div>
<div class="a" style="left:364px;top:611px;width:47px;height:22px;background:#fff;border:1px solid #3f7ef5"></div>
<div class="t" style="left:237.5px;top:616px;width:300px;text-align:center;font-size:12px;color:#2a62e0">Help</div>
<div class="a" style="left:554px;top:36px;width:341px;height:606px;border-left:1px solid #a8a8a8;border-top:1px solid #c8c8c8;border-right:1.5px solid #fff;border-bottom:1.5px solid #fff;background:#f6f6f6"></div>
<div class="a" style="left:562px;top:42px;width:117px;height:33px;background:#c8c8c8"></div>
<div class="a" style="left:565px;top:73px;width:111px;height:2px;background:#1a5cff"></div>
<div class="t" style="left:569.5px;top:52px;font-size:12px;">Element Properties</div>
<div class="a" style="left:683.5px;top:42px;width:103.0px;height:33px;background:#f2f2f2"></div>
<div class="a" style="left:683.5px;top:72px;width:103.0px;height:2px;background:#dcdcdc"></div>
<div class="t" style="left:687.0px;top:54px;font-size:12px;">Chart Appearance</div>
<div class="a" style="left:794px;top:42px;width:49px;height:33px;background:#f2f2f2"></div>
<div class="a" style="left:794px;top:72px;width:49px;height:2px;background:#dcdcdc"></div>
<div class="t" style="left:797.5px;top:54px;font-size:12px;">Options</div>
<div class="t" style="left:561px;top:79px;font-size:12px;">E<span class="u">d</span>it Properties of:</div>
<div class="a" style="left:560px;top:96.5px;width:306.5px;height:64px;background:#fff;border:1px solid #dadada"></div>
<div class="a" style="left:561px;top:97.5px;width:290px;height:62px;overflow:hidden">
<div class="a" style="left:2px;top:0.5px;width:287px;height:18px;background:#c6c6c6"></div>
<div class="t" style="left:2px;top:3.0999999999999943px">Bar1</div>
<div class="t" style="left:2px;top:21.799999999999983px">X-Axis1 (Bar1)</div>
<div class="t" style="left:2px;top:40.5px">Y-Axis1 (Bar1)</div>
<div class="t" style="left:2px;top:59.19999999999999px">Title 1</div>
</div>
<div class="a" style="left:851px;top:97.5px;width:14px;height:62px;background:#f5f5f5"></div>
<div class="a" style="left:851px;top:97.5px;width:14px;height:14px;background:#fafafa"></div>
<div class="a" style="left:851px;top:146px;width:14px;height:13px;background:#f9f9f9;border-right:1px solid #cfcfcf;border-bottom:1.5px solid #bdbdbd"></div>
<div class="a" style="left:851px;top:111.5px;width:13.5px;height:28px;background:#d6d6d6;border:1px solid #c6c6c6"></div>
<svg style="left:854px;top:101px" width="9" height="6" viewBox="0 0 9 6"><path d="M0.8 5 L4.5 1.3 L8.2 5" fill="none" stroke="#333" stroke-width="1.2"/></svg>
<svg style="left:854px;top:150px" width="9" height="6" viewBox="0 0 9 6"><path d="M0.8 1 L4.5 4.7 L8.2 1" fill="none" stroke="#333" stroke-width="1.2"/></svg>
<div class="a" style="left:870px;top:97px;width:21px;height:19px;background:#fff;border:1px solid #3f7ef5"></div>
<svg style="left:870px;top:97px" width="21" height="19" viewBox="0 0 21 19"><path d="M3.6 3.6 Q9 6.5 17.2 15" fill="none" stroke="#d0101e" stroke-width="3.1"/><path d="M16.6 3.8 Q10 8 3.8 14.6" fill="none" stroke="#d0101e" stroke-width="2.9"/></svg>
<div class="a" style="left:563px;top:173px;width:324.5px;height:99.5px;border:1px solid #dcdcdc"></div>
<div class="a" style="left:567px;top:170px;width:58px;height:8px;background:#f6f6f6"></div>
<div class="t" style="left:569.5px;top:167px;font-size:12px;">Statistics</div>
<div class="t" style="left:572.5px;top:188px;font-size:12px;">Variable:</div>
<div class="t" style="left:572.5px;top:207px;font-size:12px;"><span class="u">S</span>tatistic:</div>
<div class="a" style="left:565px;top:281.5px;width:10px;height:14px;border:1.5px solid #444"></div>
<div class="a" style="left:569.6px;top:303px;width:1.8px;height:9.5px;background:#222"></div>
<div class="a" style="left:562.5px;top:308px;width:325px;height:149px;border:1px solid #dcdcdc"></div>
<svg style="left:572px;top:411px" width="13" height="13" viewBox="0 0 13 13"><circle cx="6.5" cy="6.5" r="5.3" fill="#cbcbcb" stroke="#6a6a6a" stroke-width="1.2"/></svg>
<div class="t" style="left:588.5px;top:411px;font-size:12px;color:#a6a6a6">Standard de<span class="u">v</span>iation</div>
<div class="t" style="left:594.5px;top:432px;font-size:12px;color:#a6a6a6">Multi<span class="u">p</span>lier:</div>
<div class="a" style="left:654px;top:428px;width:65px;height:21px;border:1px solid #d4d4d4;background:#f6f6f6"></div>
<div class="t" style="left:656px;top:432px;font-size:12px;color:#a6a6a6">2</div>
<div class="t" style="left:594.5px;top:388px;font-size:12px;color:#a6a6a6">M<span class="u">u</span>ltiplier:</div>
<div class="a" style="left:654px;top:389px;width:65px;height:16px;border:1px solid #d4d4d4;border-top:none;background:#f6f6f6"></div>
<div class="t" style="left:656px;top:388px;font-size:12px;color:#a6a6a6">2</div>
<div class="a" style="left:573.5px;top:224px;width:304px;height:19px;border:1px dotted #333;background:#f2f2f2"></div>
<div class="t" style="left:574px;top:227px;font-size:12px;">Count</div>
<svg style="left:864px;top:230px" width="9" height="6" viewBox="0 0 9 6"><path d="M0.8 1 L4.5 4.7 L8.2 1" fill="none" stroke="#333" stroke-width="1.3"/></svg>
<div class="a" style="left:571px;top:244px;width:308.5px;height:150.5px;background:#fff;border:1.5px solid #111"></div>
<div class="a" style="left:573px;top:245.5px;width:291px;height:18.5px;background:#c6c6c6"></div>
<div class="t" style="left:573.8px;top:248.0px;font-size:12px;">Count</div>
<div class="t" style="left:573.8px;top:266.7px;font-size:12px;">Cumulative Count</div>
<div class="t" style="left:573.8px;top:285.4px;font-size:12px;">Percentage (?)</div>
<div class="t" style="left:573.8px;top:304.1px;font-size:12px;">Cumulative Percentage</div>
<div class="t" style="left:573.8px;top:322.8px;font-size:12px;">Value</div>
<div class="t" style="left:573.8px;top:341.5px;font-size:12px;">Mean</div>
<div class="t" style="left:573.8px;top:360.2px;font-size:12px;">Median</div>
<div class="t" style="left:573.8px;top:378.9px;font-size:12px;">Group Median</div>
<div class="a" style="left:864.5px;top:245.5px;width:14px;height:147.5px;background:#f5f5f5"></div>
<div class="a" style="left:864.5px;top:245.5px;width:14px;height:21px;background:#fafafa"></div>
<div class="a" style="left:864.5px;top:267.5px;width:14px;height:38px;background:#d6d6d6;border:1px solid #c6c6c6"></div>
<svg style="left:867px;top:249px" width="9" height="6" viewBox="0 0 9 6"><path d="M0.8 5 L4.5 1.3 L8.2 5" fill="none" stroke="#333" stroke-width="1.2"/></svg>
<svg style="left:867px;top:383px" width="9" height="6" viewBox="0 0 9 6"><path d="M0.8 1 L4.5 4.7 L8.2 1" fill="none" stroke="#333" stroke-width="1.2"/></svg>
<div class="t" style="left:566.5px;top:477px;font-size:12px;"><span class="u">B</span>ar Style:</div>
<div class="a" style="left:566px;top:496px;width:319.5px;height:21.5px;background:#fff;border-bottom:2px solid #b4b4b4"></div>
<div class="a" style="left:865.5px;top:496px;width:20px;height:19.5px;background:#f2f2f2"></div>
<svg style="left:870px;top:502px" width="9" height="6" viewBox="0 0 9 6"><path d="M0.8 1 L4.5 4.7 L8.2 1" fill="none" stroke="#333" stroke-width="1.3"/></svg>
<div class="a" style="left:572px;top:500px;width:7.5px;height:11px;background:#2a7ae8;border:1px solid #0c1c30"></div>
<div class="t" style="left:587px;top:499px;font-size:12px;">Bar</div>
<div class="a" style="left:554px;top:36px;width:2px;height:606px;background:#a4a4a4"></div>
<div class="a" style="left:556px;top:37px;width:337px;height:1.2px;background:#fff"></div>
<div class="a" style="left:556px;top:37px;width:1.2px;height:604px;background:#fff"></div>
<div class="a" style="left:554.5px;top:333.0px;width:1.8px;height:3.5px;background:#2a6cff;border-radius:1px"></div>
<div class="a" style="left:554.5px;top:337.5px;width:1.8px;height:3.5px;background:#2a6cff;border-radius:1px"></div>
<div class="a" style="left:554.5px;top:342.0px;width:1.8px;height:3.5px;background:#2a6cff;border-radius:1px"></div>
</body></html>
